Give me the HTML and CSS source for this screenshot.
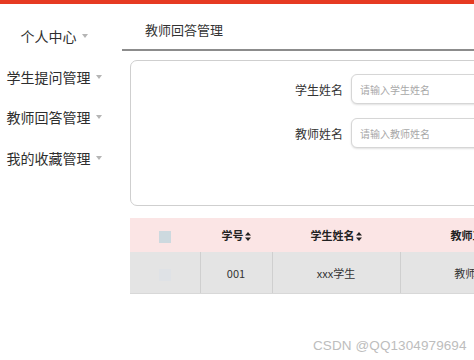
FILE: index.html
```html
<!DOCTYPE html>
<html lang="zh-CN">
<head>
<meta charset="utf-8">
<title>教师回答管理</title>
<link rel="stylesheet" href="styles.css">
</head>
<body>
<div class="topbar"></div>
<div class="layout">
  <nav class="sidebar">
    <div class="nav-item">个人中心<span class="caret"></span></div>
    <div class="nav-item">学生提问管理<span class="caret"></span></div>
    <div class="nav-item">教师回答管理<span class="caret"></span></div>
    <div class="nav-item">我的收藏管理<span class="caret"></span></div>
  </nav>
  <main class="main">
    <div class="tabs"><span class="tab">教师回答管理</span></div>
    <div class="content">
      <form class="search">
        <div class="field">
          <label class="label">学生姓名</label>
          <input class="input" type="text" placeholder="请输入学生姓名">
        </div>
        <div class="field">
          <label class="label">教师姓名</label>
          <input class="input" type="text" placeholder="请输入教师姓名">
        </div>
      </form>
      <table class="table">
        <thead>
          <tr>
            <th class="col-check"><span class="checkbox"></span></th>
            <th class="col-id">学号<svg class="sort" viewBox="0 0 6 9" width="6" height="9"><path d="M3 0 L6 3.6 L0 3.6 Z M3 9 L6 5.4 L0 5.4 Z" fill="#222"/></svg></th>
            <th class="col-name">学生姓名<svg class="sort" viewBox="0 0 6 9" width="6" height="9"><path d="M3 0 L6 3.6 L0 3.6 Z M3 9 L6 5.4 L0 5.4 Z" fill="#222"/></svg></th>
            <th class="col-teacher">教师工号<svg class="sort" viewBox="0 0 6 9" width="6" height="9"><path d="M3 0 L6 3.6 L0 3.6 Z M3 9 L6 5.4 L0 5.4 Z" fill="#222"/></svg></th>
          </tr>
        </thead>
        <tbody>
          <tr>
            <td class="col-check"><span class="checkbox faint"></span></td>
            <td>001</td>
            <td>xxx学生</td>
            <td>教师工号</td>
          </tr>
        </tbody>
      </table>
    </div>
  </main>
</div>
<div class="watermark">CSDN @QQ1304979694</div>
</body>
</html>
```
FILE: styles.css
```css
html, body {
  margin: 0;
  padding: 0;
  width: 474px;
  height: 360px;
  overflow: hidden;
  background: #fff;
  font-family: "Noto Sans CJK SC", "Liberation Sans", sans-serif;
  color: #333;
}
.topbar {
  height: 4px;
  background: #e63a22;
}
.layout {
  display: flex;
  width: 700px;
}
.sidebar {
  width: 108px;
  padding-right: 14px;
  padding-top: 12px;
  flex: none;
}
.nav-item {
  height: 40.5px;
  line-height: 40px;
  text-align: center;
  font-size: 14px;
  color: #2e2e2e;
  white-space: nowrap;
}
.caret {
  display: inline-block;
  width: 0;
  height: 0;
  margin-left: 5px;
  border-left: 3.5px solid transparent;
  border-right: 3.5px solid transparent;
  border-top: 4px solid #b5b5b5;
  vertical-align: 4px;
}
.main {
  flex: none;
  width: 578px;
}
.tabs {
  box-sizing: border-box;
  height: 47px;
  border-bottom: 2px solid #8c8c8c;
  padding-left: 23px;
  display: flex;
  align-items: center;
}
.tab {
  font-size: 13px;
  color: #333;
  margin-top: 6px;
}
.content {
  padding-left: 8px;
  padding-top: 9px;
}
.search {
  border: 1px solid #cfcfcf;
  border-radius: 7px;
  height: 146px;
  box-sizing: border-box;
  padding-top: 13px;
  display: flex;
  flex-direction: column;
  gap: 14px;
  margin: 0;
}
.field {
  display: flex;
  align-items: center;
  gap: 8px;
}
.label {
  width: 212px;
  text-align: right;
  font-size: 12px;
  color: #333;
}
.input {
  width: 240px;
  height: 30px;
  box-sizing: border-box;
  border: 1px solid #d6d6d6;
  border-radius: 6px;
  box-shadow: 0 1px 2px rgba(0,0,0,0.12);
  padding: 0 8px;
  font-family: "Noto Sans CJK SC", sans-serif;
  font-size: 10px;
  color: #333;
  outline: none;
}
.input::placeholder {
  color: #a8a8a8;
}
.table {
  margin-top: 12px;
  border-collapse: collapse;
  width: 422px;
  table-layout: fixed;
  font-size: 11px;
}
.table th {
  height: 34px;
  background: #fbe5e5;
  font-weight: bold;
  color: #222;
  text-align: center;
  padding: 0;
  white-space: nowrap;
}
.table td {
  height: 41px;
  background: #e4e4e4;
  text-align: center;
  color: #333;
  padding: 0;
  border-left: 1px solid #cfcfcf;
  border-bottom: 1px solid #d8d8d8;
  white-space: nowrap;
}
.table td.col-check {
  border-left: none;
}
.col-check { width: 70px; }
.col-id { width: 72px; }
.col-name { width: 128px; }
.col-teacher { width: 152px; }
.sort {
  vertical-align: -1px;
  margin-left: 1px;
}
.checkbox {
  display: inline-block;
  width: 12px;
  height: 12px;
  background: #cdd9df;
  vertical-align: middle;
}
.checkbox.faint {
  background: #dfe2e6;
}
.watermark {
  position: absolute;
  left: 313px;
  top: 338px;
  font-family: "Liberation Sans", Arial, sans-serif;
  font-size: 13.5px;
  color: #bdbdbd;
  letter-spacing: 0.1px;
}
```
